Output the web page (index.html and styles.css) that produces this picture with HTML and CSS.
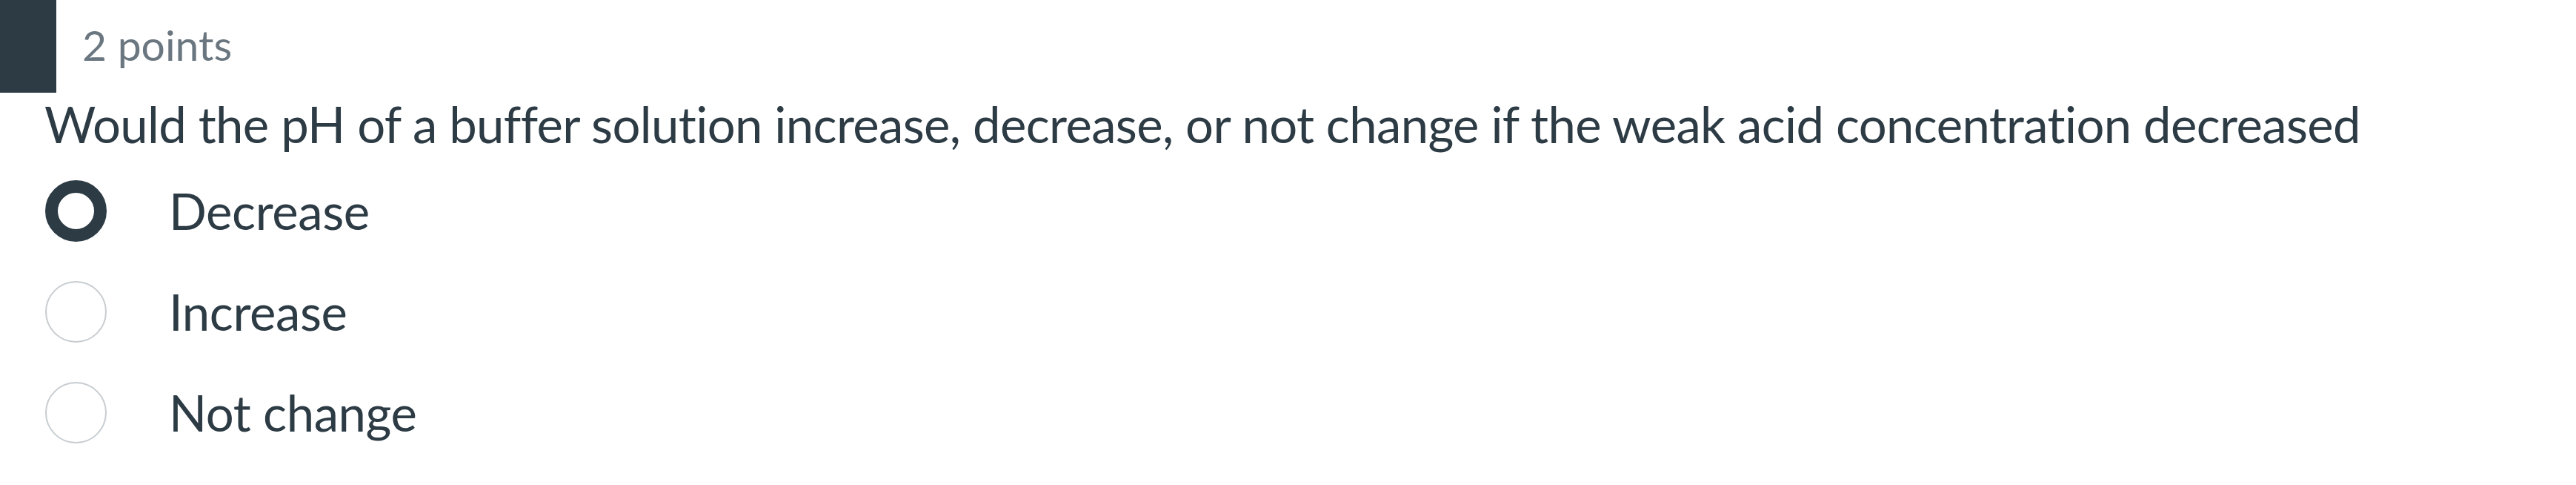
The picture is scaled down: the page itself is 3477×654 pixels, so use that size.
FILE: index.html
```html
<!DOCTYPE html>
<html lang="en">
<head>
<meta charset="utf-8">
<title>Quiz question</title>
<link rel="stylesheet" href="styles.css">
</head>
<body>
<div class="question">
  <div class="header">
    <div class="marker"></div>
    <div class="points">2 points</div>
  </div>
  <div class="prompt">Would the pH of a buffer solution increase, decrease, or not change if the weak acid concentration decreased</div>
  <div class="answers">
    <label class="answer">
      <span class="radio radio-selected"></span>
      <span class="answer-text">Decrease</span>
    </label>
    <label class="answer">
      <span class="radio"></span>
      <span class="answer-text">Increase</span>
    </label>
    <label class="answer">
      <span class="radio"></span>
      <span class="answer-text">Not change</span>
    </label>
  </div>
</div>
</body>
</html>
```
FILE: styles.css
```css
html, body {
  margin: 0;
  padding: 0;
  background: #ffffff;
}

body {
  font-family: Lato, "Liberation Sans", sans-serif;
  color: #2d3b45;
  font-variant-ligatures: none;
  -webkit-font-smoothing: antialiased;
}

.question {
  display: flex;
  flex-direction: column;
}

.header {
  display: flex;
  align-items: flex-start;
  height: 125px;
}

.marker {
  width: 76px;
  height: 125px;
  background: #2d3b45;
  flex: none;
}

.points {
  margin-left: 35px;
  margin-top: 26px;
  font-size: 57px;
  line-height: 1.2;
  color: #6b7780;
}

.prompt {
  margin-top: 2px;
  margin-left: 60px;
  font-size: 67px;
  line-height: 1.2;
  letter-spacing: -0.62px;
  white-space: nowrap;
}

.answers {
  display: flex;
  flex-direction: column;
  margin-top: 9px;
}

.answer {
  display: flex;
  align-items: center;
  height: 136px;
  padding-left: 61px;
}

.radio {
  box-sizing: border-box;
  width: 83px;
  height: 83px;
  border-radius: 50%;
  border: 2px solid #c7cdd1;
  background: #ffffff;
  flex: none;
}

.radio-selected {
  border: 17px solid #2d3b45;
}

.answer-text {
  margin-left: 84px;
  font-size: 67px;
  line-height: 1.2;
  letter-spacing: -0.4px;
}
```
